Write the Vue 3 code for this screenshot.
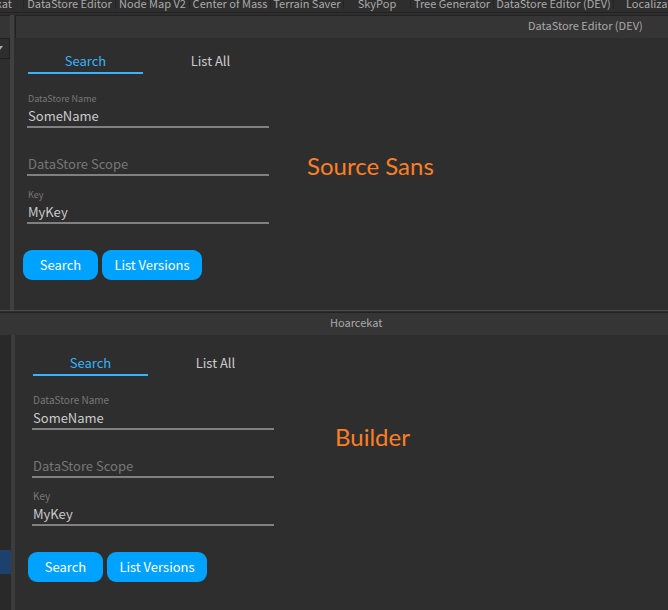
<script setup>
import { reactive } from 'vue'

const toolbar = [
  'kat',
  'DataStore Editor',
  'Node Map V2',
  'Center of Mass',
  'Terrain Saver',
  'SkyPop',
  'Tree Generator',
  'DataStore Editor (DEV)',
  'Localizat',
]

const panes = reactive([
  { id: 'source', title: 'DataStore Editor (DEV)', note: 'Source Sans', tab: 'Search', name: 'SomeName', scope: '', key: 'MyKey' },
  { id: 'builder', title: 'Hoarcekat', note: 'Builder', tab: 'Search', name: 'SomeName', scope: '', key: 'MyKey' },
])
</script>

<template>
  <div class="studio">
    <nav class="toolbar" aria-label="Plugins">
      <button v-for="item in toolbar" :key="item" type="button" class="tool">{{ item }}</button>
    </nav>

    <section v-for="pane in panes" :key="pane.id" class="pane" :class="pane.id">
      <aside class="side">
        <div v-if="pane.id === 'source'" class="side-head"></div>
        <div v-if="pane.id === 'source'" class="picker">
          <select class="picker-select" aria-label="Filter"></select>
          <svg class="picker-arrow" viewBox="0 0 6 4" aria-hidden="true"><path d="M0 0H6L3 4Z" /></svg>
        </div>
        <div v-else class="selected-row"></div>
      </aside>
      <header class="title">{{ pane.title }}</header>
      <div class="content">
        <form class="form" @submit.prevent>
          <div class="tabs" role="tablist">
            <button
              v-for="t in ['Search', 'List All']"
              :key="t"
              type="button"
              role="tab"
              class="tab"
              :class="{ active: pane.tab === t }"
              :aria-selected="pane.tab === t"
              @click="pane.tab = t"
            >{{ t }}</button>
          </div>
          <div class="field">
            <label :for="pane.id + '-name'">DataStore Name</label>
            <input :id="pane.id + '-name'" v-model="pane.name" type="text" />
          </div>
          <div class="field">
            <input v-model="pane.scope" type="text" placeholder="DataStore Scope" aria-label="DataStore Scope" />
          </div>
          <div class="field">
            <label :for="pane.id + '-key'">Key</label>
            <input :id="pane.id + '-key'" v-model="pane.key" type="text" />
          </div>
          <div class="actions">
            <button type="submit" class="action search">Search</button>
            <button type="button" class="action versions">List Versions</button>
          </div>
        </form>
        <p class="note">{{ pane.note }}</p>
      </div>
    </section>
  </div>
</template>

<style>
body {
  margin: 0;
  background: #2e2e2e;
}
</style>

<style scoped>
.studio {
  display: flex;
  flex-direction: column;
  min-height: 100vh;
  overflow: hidden;
  background: #2e2e2e;
  color: #cccccc;
  font-family: "Noto Sans CJK JP", "Noto Sans", sans-serif;
  font-size: 13px;
}

button,
input,
select {
  margin: 0;
  padding: 0;
  border: 0;
  border-radius: 0;
  background: none;
  color: inherit;
  font: inherit;
}

.toolbar {
  display: grid;
  grid-template-columns: 24px 92px 74px 81px 73px 67px 83px 120px minmax(0, 1fr);
  grid-template-rows: 9px;
  align-items: end;
  height: 12px;
  border-bottom: 1px solid #222222;
  color: #aaaaaa;
  font-size: 11px;
}

.tool {
  height: 12px;
  line-height: 12px;
  border-right: 1px solid #242424;
  white-space: nowrap;
}

.tool:first-child {
  padding-right: 11px;
  text-align: right;
  direction: rtl;
}

.tool:last-child {
  padding-left: 12px;
  border-right: 0;
  text-align: left;
}

.pane {
  display: grid;
  grid-template-rows: auto 1fr;
}

.title {
  box-sizing: border-box;
  height: 23px;
  border-top: 1px solid #222222;
  background: #353535;
  color: #aaaaaa;
  font-size: 11px;
  line-height: 18px;
}

.source {
  grid-template-columns: 14px minmax(0, 1fr);
  padding-top: 2px;
}

.source .side {
  grid-row: 1 / 3;
  border-right: 4px solid #404040;
}

.side-head {
  height: 22px;
  border-top: 1px solid #222222;
  background: #353535;
}

.picker {
  position: relative;
  height: 19px;
  border: solid #1f1f1f;
  border-width: 1px 1px 1px 0;
}

.picker-select {
  display: block;
  width: 100%;
  height: 100%;
  appearance: none;
}

.picker-arrow {
  position: absolute;
  top: 7px;
  left: -3px;
  width: 6px;
  height: 4px;
  fill: #aaaaaa;
  pointer-events: none;
}

.source .title {
  margin-left: 1px;
  padding-left: 512px;
  border-left: 1px solid #222222;
}

.builder {
  flex: 1;
  grid-template-columns: 15px minmax(0, 1fr);
  border-top: 1px solid #4a4a4a;
  padding-top: 1px;
}

.builder .title {
  grid-column: 1 / 3;
  grid-row: 1;
  padding-left: 330px;
}

.builder .side {
  grid-row: 2;
  border-right: 4px solid #3c3c3c;
  background: #292929;
}

.selected-row {
  height: 24px;
  margin-top: 215px;
  background: #1c416c;
}

.content {
  display: flex;
  align-items: flex-start;
}

.source .content {
  gap: 38px;
  padding: 10px 0 30px 9px;
}

.builder .content {
  gap: 61px;
  padding: 15px 0 28px 13px;
}

.form {
  width: 246px;
}

.tabs {
  display: grid;
  grid-template-columns: 115px 115px;
  gap: 10px;
  margin: 0 0 6px 5px;
}

.tab {
  height: 26px;
  padding-top: 2px;
  border-bottom: 2px solid transparent;
  line-height: 22px;
}

.tab.active {
  border-bottom-color: #35b5ff;
  color: #35b5ff;
}

.field {
  display: flex;
  flex-direction: column;
  justify-content: flex-end;
  height: 48px;
  margin-left: 4px;
}

.field label {
  padding-left: 1px;
  color: #777777;
  font-size: 9px;
  line-height: 14px;
}

.field input {
  height: 20px;
  padding-left: 1px;
  border-bottom: 2px solid #808080;
  outline: none;
  line-height: 20px;
}

.field input::placeholder {
  color: #777777;
  opacity: 1;
}

.actions {
  display: flex;
  gap: 4px;
  margin-top: 26px;
}

.action {
  height: 30px;
  border-radius: 9px;
  background: #00a2ff;
  color: #ffffff;
  line-height: 30px;
}

.search {
  width: 75px;
}

.versions {
  width: 100px;
}

.builder .field label {
  font-size: 10px;
  line-height: 16px;
}

.note {
  margin: 103px 0 0;
  color: #ff7f27;
  font-family: Lato, sans-serif;
  font-size: 24px;
  line-height: 30px;
}

.builder .note {
  margin-top: 72px;
}
</style>
